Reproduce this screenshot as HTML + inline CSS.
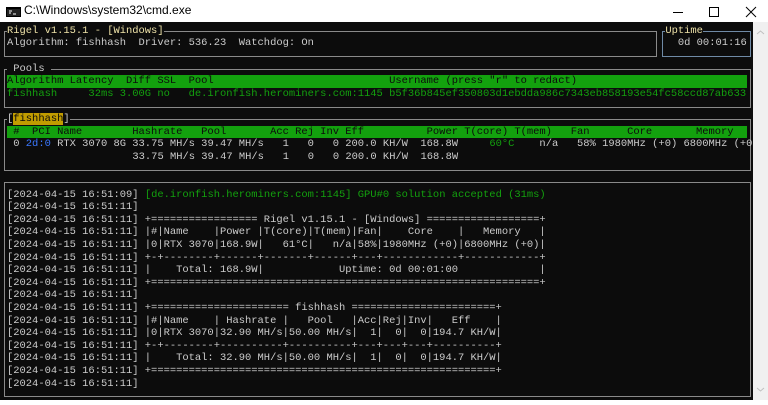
<!DOCTYPE html>
<html><head><meta charset="utf-8"><style>
*{margin:0;padding:0;box-sizing:border-box}
body{width:768px;height:400px;overflow:hidden;background:#fff;position:relative;font-family:"Liberation Mono",monospace}
#tb{position:absolute;left:0;top:0;width:768px;height:22px;background:#fff}
#tb .t{position:absolute;left:24px;top:3px;font:12px "Liberation Sans",sans-serif;color:#000}
#con{position:absolute;left:0;top:22px;width:753px;height:378px;background:#0c0c0c}
#sb{position:absolute;left:753px;top:22px;width:15px;height:378px;background:#f0f0f0}
.s{position:absolute;left:calc(0.73px + var(--c)*6.27px);top:calc(24.7px + var(--r)*12.6px);height:12.6px;line-height:12.6px;font-size:10.45px;white-space:pre;color:#cccccc}
.g{color:#13a10e}.y{color:#eee2a8}.b{color:#3b78ff}
.bar{position:absolute;left:7px;width:740px;height:12.6px;background:#13a10e;top:calc(24.7px + var(--r)*12.6px)}
.k{color:#0c0c0c}
.box{position:absolute;border:1px solid #8a8a8a;left:calc(0.73px + (var(--c0) + 0.5)*6.27px);width:calc((var(--c1) - var(--c0))*6.27px + 1px);top:calc(24.7px + (var(--r0) + 0.5)*12.6px);height:calc((var(--r1) - var(--r0))*12.6px + 1px)}
.bg{background:#0c0c0c}
</style></head><body>
<div id="tb">
<svg style="position:absolute;left:6px;top:7px" width="15" height="10"><rect x="0" y="0" width="15" height="10" fill="#000"/><rect x="1" y="2" width="13" height="7" fill="#222"/><path d="M3 4h3M3 6h2M7 7h3" stroke="#fff" stroke-width="1"/></svg>
<div class="t">C:\Windows\system32\cmd.exe</div>
<svg style="position:absolute;left:670px;top:5px" width="90" height="14"><path d="M3 7.5h10" stroke="#000"/><rect x="39.5" y="2.5" width="9" height="9" fill="none" stroke="#000"/><path d="M76 2l10 10M86 2l-10 10" stroke="#000"/></svg>
</div>
<div id="con"></div>
<div id="sb"><svg width="15" height="378"><path d="M4 12l3.5-3 3.5 3" fill="none" stroke="#c0c0c0"/><path d="M4 366l3.5 3 3.5-3" fill="none" stroke="#c0c0c0"/></svg></div>

<div class="box" style="--c0:0;--c1:104;--r0:0;--r1:2"></div>
<div class="box" style="--c0:105;--c1:119;--r0:0;--r1:2;border-color:#6f8aa6"></div>
<div class="box" style="--c0:0;--c1:119;--r0:3;--r1:6"></div>
<div class="box" style="--c0:0;--c1:119;--r0:7;--r1:11"></div>
<div class="box" style="--c0:0;--c1:119;--r0:12;--r1:29"></div>

<div class="s y bg" style="--c:1;--r:0">Rigel v1.15.1 - [Windows]</div>
<div class="s y bg" style="--c:106;--r:0">Uptime</div>
<div class="s" style="--c:1;--r:1">Algorithm: fishhash  Driver: 536.23  Watchdog: On</div>
<div class="s" style="--c:108;--r:1">0d 00:01:16</div>

<div class="s bg" style="--c:1;--r:3"> Pools </div>
<div class="bar" style="--r:4"></div>
<div class="s k" style="--c:1;--r:4">Algorithm Latency  Diff SSL  Pool                            Username (press "r" to redact)</div>
<div class="s g" style="--c:1;--r:5">fishhash     32ms 3.00G no   de.ironfish.herominers.com:1145 b5f36b845ef350803d1ebdda986c7343eb858193e54fc58ccd87ab633</div>

<div class="s bg" style="--c:1;--r:7">[<span style="background:#c19c00;color:#0c0c0c">fishhash</span>]</div>
<div class="bar" style="--r:8"></div>
<div class="s k" style="--c:1;--r:8"> #  PCI Name        Hashrate   Pool       Acc Rej Inv Eff          Power T(core) T(mem)   Fan      Core       Memory</div>
<div class="s" style="--c:1;--r:9"> 0 <span class="b">2d:0</span> RTX 3070 8G 33.75 MH/s 39.47 MH/s   1   0   0 200.0 KH/W  168.8W     <span class="g">60°C</span>    n/a   58% 1980MHz (+0) 6800MHz (+0</div>
<div class="s" style="--c:21;--r:10">33.75 MH/s 39.47 MH/s   1   0   0 200.0 KH/W  168.8W</div>

<div class="s" style="--c:1;--r:13">[2024-04-15 16:51:09] <span class="g">[de.ironfish.herominers.com:1145] GPU#0 solution accepted (31ms)</span></div>
<div class="s" style="--c:1;--r:14">[2024-04-15 16:51:11]</div>
<div class="s" style="--c:1;--r:15">[2024-04-15 16:51:11] +================= Rigel v1.15.1 - [Windows] ==================+</div>
<div class="s" style="--c:1;--r:16">[2024-04-15 16:51:11] |#|Name    |Power |T(core)|T(mem)|Fan|    Core    |   Memory   |</div>
<div class="s" style="--c:1;--r:17">[2024-04-15 16:51:11] |0|RTX 3070|168.9W|   61°C|   n/a|58%|1980MHz (+0)|6800MHz (+0)|</div>
<div class="s" style="--c:1;--r:18">[2024-04-15 16:51:11] +-+--------+------+-------+------+---+------------+------------+</div>
<div class="s" style="--c:1;--r:19">[2024-04-15 16:51:11] |    Total: 168.9W|            Uptime: 0d 00:01:00             |</div>
<div class="s" style="--c:1;--r:20">[2024-04-15 16:51:11] +==============================================================+</div>
<div class="s" style="--c:1;--r:21">[2024-04-15 16:51:11]</div>
<div class="s" style="--c:1;--r:22">[2024-04-15 16:51:11] +====================== fishhash =======================+</div>
<div class="s" style="--c:1;--r:23">[2024-04-15 16:51:11] |#|Name    | Hashrate |   Pool   |Acc|Rej|Inv|   Eff    |</div>
<div class="s" style="--c:1;--r:24">[2024-04-15 16:51:11] |0|RTX 3070|32.90 MH/s|50.00 MH/s|  1|  0|  0|194.7 KH/W|</div>
<div class="s" style="--c:1;--r:25">[2024-04-15 16:51:11] +-+--------+----------+----------+---+---+---+----------+</div>
<div class="s" style="--c:1;--r:26">[2024-04-15 16:51:11] |    Total: 32.90 MH/s|50.00 MH/s|  1|  0|  0|194.7 KH/W|</div>
<div class="s" style="--c:1;--r:27">[2024-04-15 16:51:11] +=======================================================+</div>
<div class="s" style="--c:1;--r:28">[2024-04-15 16:51:11]</div>
</body></html>
